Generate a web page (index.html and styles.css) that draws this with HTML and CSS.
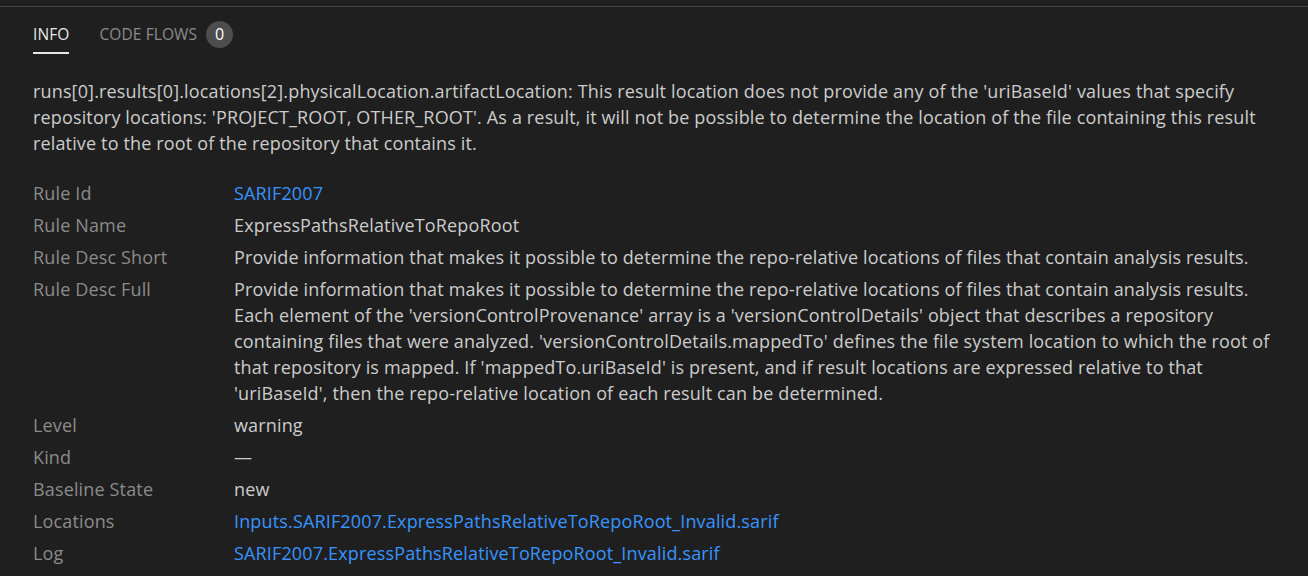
FILE: index.html
```html
<!DOCTYPE html>
<html>
<head>
<meta charset="utf-8">
<link rel="stylesheet" href="styles.css">
</head>
<body>
<div class="panel">
  <div class="tabs">
    <div class="tab active">INFO</div>
    <div class="tab">CODE FLOWS <span class="badge">0</span></div>
  </div>
  <div class="content">
    <div class="message">runs[0].results[0].locations[2].physicalLocation.artifactLocation: This result location does not provide any of the 'uriBaseId' values that specify<br>repository locations: 'PROJECT_ROOT, OTHER_ROOT'. As a result, it will not be possible to determine the location of the file containing this result<br>relative to the root of the repository that contains it.</div>
    <div class="props">
      <div class="label">Rule Id</div><div class="value"><span class="link">SARIF2007</span></div>
      <div class="label">Rule Name</div><div class="value">ExpressPathsRelativeToRepoRoot</div>
      <div class="label">Rule Desc Short</div><div class="value">Provide information that makes it possible to determine the repo-relative locations of files that contain analysis results.</div>
      <div class="label">Rule Desc Full</div><div class="value">Provide information that makes it possible to determine the repo-relative locations of files that contain analysis results.<br>Each element of the 'versionControlProvenance' array is a 'versionControlDetails' object that describes a repository<br>containing files that were analyzed. 'versionControlDetails.mappedTo' defines the file system location to which the root of<br>that repository is mapped. If 'mappedTo.uriBaseId' is present, and if result locations are expressed relative to that<br>'uriBaseId', then the repo-relative location of each result can be determined.</div>
      <div class="label">Level</div><div class="value">warning</div>
      <div class="label">Kind</div><div class="value">—</div>
      <div class="label">Baseline State</div><div class="value">new</div>
      <div class="label">Locations</div><div class="value"><span class="link">Inputs.SARIF2007.ExpressPathsRelativeToRepoRoot_Invalid.sarif</span></div>
      <div class="label">Log</div><div class="value"><span class="link">SARIF2007.ExpressPathsRelativeToRepoRoot_Invalid.sarif</span></div>
    </div>
  </div>
</div>
</body>
</html>
```
FILE: styles.css
```css
html, body {
  margin: 0;
  padding: 0;
  background: #1f1f1f;
  height: 100%;
  overflow: hidden;
}
body {
  font-family: "Open Sans", "Noto Sans", sans-serif;
  color: #cccccc;
  font-size: 18px;
  letter-spacing: 0.15px;
}
.panel {
  margin-top: 6px;
  border-top: 1px solid #454545;
}
.tabs {
  display: flex;
  gap: 30px;
  padding: 0 33px;
  height: 47px;
  align-items: stretch;
}
.tab {
  display: flex;
  align-items: center;
  gap: 9px;
  font-size: 15.5px;
  letter-spacing: 0.1px;
  color: #8c8c8c;
  border-bottom: 2px solid transparent;
  box-sizing: border-box;
  padding-top: 9px;
}
.tab.active {
  color: #e7e7e7;
  border-bottom-color: #e7e7e7;
}
.badge {
  display: inline-flex;
  align-items: center;
  justify-content: center;
  width: 27px;
  height: 27px;
  border-radius: 50%;
  background: #4d4d4d;
  color: #ffffff;
  font-size: 16px;
}
.content {
  padding: 24px 28px 0 33px;
}
.message {
  line-height: 26px;
  margin-bottom: 24px;
}
.props {
  display: grid;
  grid-template-columns: 201px 1fr;
  row-gap: 6px;
  line-height: 26px;
}
.label {
  color: #8b8b8b;
}
.value {
  color: #cccccc;
}
.link {
  color: #3794ff;
}
```
